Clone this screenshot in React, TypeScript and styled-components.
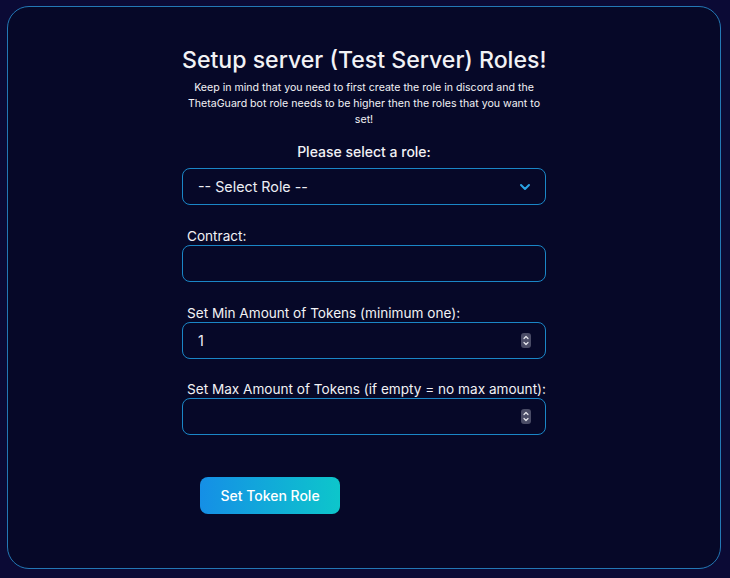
import styled, { createGlobalStyle } from 'styled-components';

const GlobalStyle = createGlobalStyle`
  html, body {
    margin: 0;
    padding: 0;
    background: #0b0a35;
    font-family: Inter, "Noto Sans", "Liberation Sans", sans-serif;
    color: #f2f2f5;
  }
`;

const Page = styled.div`
  padding: 6px 9px 9px 7px;
  height: 578px;
  box-sizing: border-box;
`;

const Card = styled.div`
  height: 100%;
  box-sizing: border-box;
  background: #060828;
  border: 1.5px solid #2378b5;
  border-radius: 22px;
  display: flex;
  justify-content: center;
  padding-top: 38px;
`;

const Column = styled.div`
  width: 364px;
  display: flex;
  flex-direction: column;
`;

const Title = styled.h1`
  margin: 0;
  font-size: 23.1px;
  line-height: 30px;
  font-weight: 500;
  text-align: center;
  white-space: nowrap;
`;

const Note = styled.p`
  margin: 5px 0 0;
  font-size: 10.6px;
  line-height: 16px;
  text-align: center;
`;

const CenterLabel = styled.div`
  margin-top: 15px;
  font-size: 14px;
  line-height: 18px;
  font-weight: 500;
  text-align: center;
`;

const FieldLabel = styled.div`
  margin-top: 21.8px;
  padding-left: 5px;
  font-size: 13.6px;
  line-height: 18px;
  white-space: nowrap;
`;

const Box = styled.div<{ $top?: number }>`
  margin-top: ${(p) => p.$top ?? 0}px;
  height: 37px;
  box-sizing: border-box;
  border: 1.5px solid #1a86c6;
  border-radius: 8px;
  display: flex;
  align-items: center;
  justify-content: space-between;
  padding: 0 14px 0 15px;
  font-size: 14.3px;
`;

const Value = styled.span`
  color: #eceef4;
`;

const Button = styled.button`
  margin: 42px 0 0 18px;
  width: 140px;
  height: 37px;
  border: none;
  border-radius: 8px;
  background: linear-gradient(90deg, #158fe6 0%, #0dc6cb 100%);
  color: #ffffff;
  font-family: inherit;
  font-size: 14px;
  font-weight: 500;
  cursor: pointer;
`;

const Chevron = () => (
  <svg width="12" height="8" viewBox="0 0 12 8">
    <path d="M2 2 L6 6 L10 2" fill="none" stroke="#2aa3e6" strokeWidth="2" strokeLinecap="round" strokeLinejoin="round" />
  </svg>
);

const Spinner = () => (
  <svg width="10" height="15" viewBox="0 0 10 15">
    <rect x="0" y="0" width="10" height="15" rx="3" fill="#4a4c66" />
    <path d="M3 5.5 L5 3.5 L7 5.5" fill="none" stroke="#e6e7ee" strokeWidth="1.2" strokeLinecap="round" strokeLinejoin="round" />
    <path d="M3 9.5 L5 11.5 L7 9.5" fill="none" stroke="#e6e7ee" strokeWidth="1.2" strokeLinecap="round" strokeLinejoin="round" />
  </svg>
);

export default function App() {
  return (
    <>
      <GlobalStyle />
      <Page>
        <Card>
          <Column>
            <Title>Setup server (Test Server) Roles!</Title>
            <Note>
              Keep in mind that you need to first create the role in discord and the ThetaGuard bot role needs to be
              higher then the roles that you want to set!
            </Note>
            <CenterLabel>Please select a role:</CenterLabel>
            <Box $top={7}>
              <Value>-- Select Role --</Value>
              <Chevron />
            </Box>
            <FieldLabel>Contract:</FieldLabel>
            <Box />
            <FieldLabel>Set Min Amount of Tokens (minimum one):</FieldLabel>
            <Box>
              <Value>1</Value>
              <Spinner />
            </Box>
            <FieldLabel>Set Max Amount of Tokens (if empty = no max amount):</FieldLabel>
            <Box>
              <Value />
              <Spinner />
            </Box>
            <div>
              <Button>Set Token Role</Button>
            </div>
          </Column>
        </Card>
      </Page>
    </>
  );
}
